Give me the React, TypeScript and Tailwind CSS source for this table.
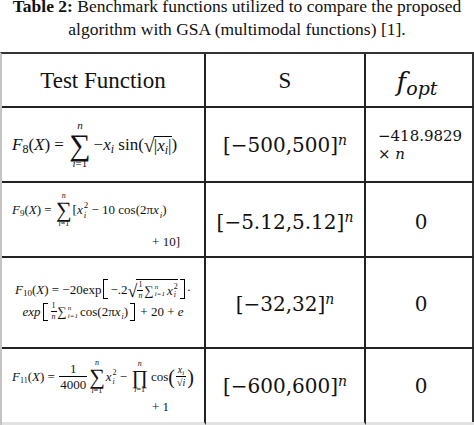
import React from 'react';

// math helpers
const I = ({ children }: { children: React.ReactNode }) => <i>{children}</i>;

// stacked super/subscript (x_i^2 style)
function SS({ sup, sub, cls = 'text-[9px]' }: { sup: React.ReactNode; sub: React.ReactNode; cls?: string }) {
  return (
    <span className={`inline-flex flex-col leading-[1.05] ml-[1px] relative top-[1px] ${cls}`}>
      <span>{sup}</span>
      <span className="italic">{sub}</span>
    </span>
  );
}

function BigOp({ sym, size = 'text-[30px]', lim = 'text-[11px]' }: { sym: string; size?: string; lim?: string }) {
  return (
    <span className="inline-flex flex-col items-center leading-none mx-[1px]">
      <span className={`${lim} italic leading-none`}>n</span>
      <span className={`${size} leading-[0.9]`}>{sym}</span>
      <span className={`${lim} leading-none`}>
        <i>i</i>=1
      </span>
    </span>
  );
}

function Frac({ num, den, cls = '' }: { num: React.ReactNode; den: React.ReactNode; cls?: string }) {
  return (
    <span className={`inline-flex flex-col items-center leading-none mx-[1px] ${cls}`}>
      <span className="px-[1px] pb-[1px]">{num}</span>
      <span className="border-t border-black px-[1px] pt-[1px]">{den}</span>
    </span>
  );
}

// tall square bracket drawn with borders
const LB = ({ h }: { h: string }) => <span className={`inline-block w-[5px] ${h} border-l-[1.5px] border-y-[1.5px] border-black mx-[2px]`} />;
const RB = ({ h }: { h: string }) => <span className={`inline-block w-[5px] ${h} border-r-[1.5px] border-y-[1.5px] border-black mx-[2px]`} />;

const serif = "[font-family:'Liberation_Serif',serif]";
const dv = "[font-family:'DejaVu_Serif',serif]";

export default function App() {
  return (
    <div className={`w-[474px] h-[425px] overflow-hidden bg-white text-[#111] ${serif}`}>
      {/* caption */}
      <div className="text-[17.5px] leading-[23px] text-center whitespace-nowrap -mt-[5px]">
        <div>
          <b>Table 2:</b> Benchmark functions utilized to compare the proposed
        </div>
        <div>algorithm with GSA (multimodal functions) [1].</div>
      </div>

      {/* table */}
      <div className="mt-[11px] grid grid-cols-[204px_160px_110px] grid-rows-[54px_75px_75px_91px_76px] border-t-2 border-[#333] border-r-2 border-r-[#333] border-l-2 border-l-[#c4c4c4]">
        {/* header */}
        <div className="border-r-2 border-b-2 border-[#222] flex items-center justify-center text-[23px] pt-[2px]">Test Function</div>
        <div className="border-r-2 border-b-2 border-[#222] flex items-center justify-center text-[23px] pt-[2px]">S</div>
        <div className="border-b-2 border-[#222] flex items-center justify-center pt-[4px] pr-[8px]">
          <span className={`italic text-[26px] leading-none ${dv}`}>
            f<span className="text-[19px] relative top-[4px]">opt</span>
          </span>
        </div>

        {/* F8 */}
        <div className="border-r-2 border-b-2 border-[#222] flex items-center pl-[10px] text-[17px] whitespace-nowrap">
          <span>
            <I>F</I>
            <sub className="text-[12px]">8</sub>(<I>X</I>) =&nbsp;
          </span>
          <BigOp sym="∑" size="text-[30px]" lim="text-[11px]" />
          <span className="ml-[2px]">
            −<I>x</I>
            <sub className="italic text-[12px]">i</sub> sin(
          </span>
          <span className="inline-flex items-end">
            <span className="text-[20px] leading-none -mr-[1px]">√</span>
            <span className="border-t border-black leading-[18px] mt-[2px]">
              |<I>x</I>
              <sub className="italic text-[12px]">i</sub>|
            </span>
          </span>
          <span>)</span>
        </div>
        <div className={`border-r-2 border-b-2 border-[#222] flex items-center justify-center text-[20px] pt-[1px] ${dv}`}>
          <span>
            [−500,500]<sup className="italic text-[14px]">n</sup>
          </span>
        </div>
        <div className={`border-b-2 border-[#222] flex flex-col justify-center pl-[12px] text-[15px] leading-[18px] ${dv}`}>
          <span>−418.9829</span>
          <span>
            × <I>n</I>
          </span>
        </div>

        {/* F9 */}
        <div className="border-r-2 border-b-2 border-[#222] flex flex-col justify-center text-[13px] whitespace-nowrap pt-[4px]">
          <div className="flex items-center pl-[10px]">
            <span>
              <I>F</I>
              <sub className="text-[9px]">9</sub>(<I>X</I>) =&nbsp;
            </span>
            <BigOp sym="∑" size="text-[22px]" lim="text-[8px]" />
            <span>
              [<I>x</I>
            </span>
            <SS sup="2" sub="i" />
            <span>&nbsp;− 10 cos(2π<I>x</I></span>
            <SS sup={'\u00a0'} sub="i" />
            <span>)</span>
          </div>
          <div className="self-end pr-[24px] mt-[4px]">+ 10]</div>
        </div>
        <div className={`border-r-2 border-b-2 border-[#222] flex items-center justify-center text-[20px] pt-[4px] ${dv}`}>
          <span>
            [−5.12,5.12]<sup className="italic text-[14px]">n</sup>
          </span>
        </div>
        <div className={`border-b-2 border-[#222] flex items-center justify-center text-[20px] pt-[4px] ${dv}`}>0</div>

        {/* F10 */}
        <div className="border-r-2 border-b-2 border-[#222] flex flex-col items-center justify-center text-[13px] whitespace-nowrap gap-[2px] pb-[5px]">
          <div className="flex items-center">
            <span>
              <I>F</I>
              <sub className="text-[9px]">10</sub>(<I>X</I>) = −20exp
            </span>
            <LB h="h-[20px]" />
            <span>−.2</span>
            <span className="inline-flex items-end">
              <span className="text-[18px] leading-none">√</span>
              <span className="border-t border-black flex items-center pt-[1px] -ml-[1px]">
                <Frac num="1" den={<I>n</I>} cls="text-[8px]" />
                <span>∑</span>
                <SS sup={<i>n</i>} sub={<span>i=1</span>} cls="text-[7px]" />
                <span className="ml-[2px]">
                  <I>x</I>
                </span>
                <SS sup="2" sub="i" cls="text-[8px]" />
              </span>
            </span>
            <RB h="h-[20px]" />
            <span>·</span>
          </div>
          <div className="flex items-center">
            <span className="italic">exp</span>
            <LB h="h-[18px]" />
            <Frac num="1" den={<I>n</I>} cls="text-[8px]" />
            <span>∑</span>
            <SS sup={<i>n</i>} sub={<span>i=1</span>} cls="text-[7px]" />
            <span className="ml-[2px]">cos(2π<I>x</I></span>
            <SS sup={'\u00a0'} sub="i" cls="text-[8px]" />
            <span>)</span>
            <RB h="h-[18px]" />
            <span>&nbsp;+ 20 +&nbsp;</span>
            <span className="italic">e</span>
          </div>
        </div>
        <div className={`border-r-2 border-b-2 border-[#222] flex items-center justify-center text-[20px] pt-[2px] ${dv}`}>
          <span>
            [−32,32]<sup className="italic text-[14px]">n</sup>
          </span>
        </div>
        <div className={`border-b-2 border-[#222] flex items-center justify-center text-[20px] pt-[2px] ${dv}`}>0</div>

        {/* F11 */}
        <div className="flex flex-col justify-center border-r-2 border-b-[3px] border-r-[#222] border-b-[#e2e2e2] text-[13px] whitespace-nowrap pt-[4px]">
          <div className="flex items-center pl-[10px]">
            <span>
              <I>F</I>
              <sub className="text-[8px]">11</sub>(<I>X</I>) =&nbsp;
            </span>
            <Frac num="1" den="4000" cls="text-[13px]" />
            <BigOp sym="∑" size="text-[22px]" lim="text-[8px]" />
            <span>
              <I>x</I>
            </span>
            <SS sup="2" sub="i" cls="text-[8px]" />
            <span>&nbsp;−&nbsp;</span>
            <BigOp sym="∏" size="text-[20px]" lim="text-[8px]" />
            <span className="ml-[2px]">cos</span>
            <span className="text-[20px] leading-none">(</span>
            <Frac
              num={
                <span>
                  <I>x</I>
                  <sub className="italic text-[7px]">i</sub>
                </span>
              }
              den={
                <span>
                  √<span className="border-t border-black italic">i</span>
                </span>
              }
              cls="text-[10px]"
            />
            <span className="text-[20px] leading-none">)</span>
          </div>
          <div className="self-end pr-[35px] mt-[2px]">+ 1</div>
        </div>
        <div className={`border-r-2 border-b-[3px] border-r-[#222] border-b-[#e2e2e2] flex items-center justify-center text-[20px] ${dv}`}>
          <span>
            [−600,600]<sup className="italic text-[14px]">n</sup>
          </span>
        </div>
        <div className={`border-b-[3px] border-b-[#e2e2e2] flex items-center justify-center text-[20px] ${dv}`}>0</div>
      </div>
    </div>
  );
}
